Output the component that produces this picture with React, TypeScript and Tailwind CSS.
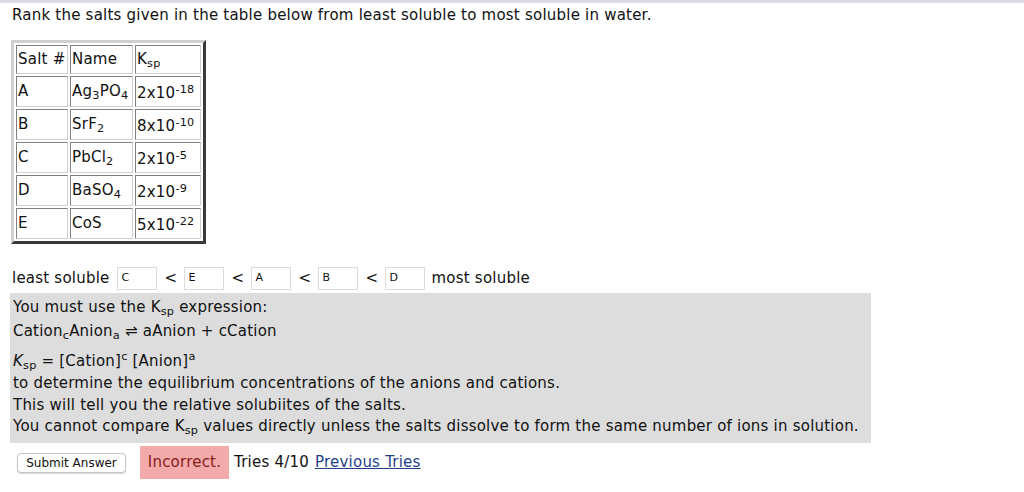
const font = { fontFamily: '"DejaVu Sans", Verdana, sans-serif' };

type Salt = { id: string; name: React.ReactNode; base: string; exp: string };

const salts: Salt[] = [
  { id: "A", name: <>Ag<sub>3</sub>PO<sub>4</sub></>, base: "2x10", exp: "-18" },
  { id: "B", name: <>SrF<sub>2</sub></>, base: "8x10", exp: "-10" },
  { id: "C", name: <>PbCl<sub>2</sub></>, base: "2x10", exp: "-5" },
  { id: "D", name: <>BaSO<sub>4</sub></>, base: "2x10", exp: "-9" },
  { id: "E", name: <>CoS</>, base: "5x10", exp: "-22" },
];

const order = ["C", "E", "A", "B", "D"];

const cell =
  "whitespace-nowrap border border-t-[#808080] border-l-[#808080] border-r-[#d0d0d0] border-b-[#d0d0d0] px-[1px] align-middle text-left font-normal";

function Box({ value }: { value: string }) {
  return (
    <span className="inline-flex h-[23px] w-[40px] items-center border border-[#dcdcdc] bg-white pl-[4px] text-[11px]">
      {value}
    </span>
  );
}

export default function App() {
  return (
    <div className="min-h-screen whitespace-nowrap bg-white text-[15px] tracking-[0.22px] text-[#111]" style={font}>
      {/* top rule */}
      <div className="h-[3px] bg-[#d9dbe8]" />

      <div className="pl-[10px] pr-2">
        <p className="pl-[2px] pt-[2px] leading-[20px]">
          Rank the salts given in the table below from least soluble to most soluble in water.
        </p>

        {/* Salt table */}
        <table className="ml-[1px] mt-[15px] border-separate border-spacing-[2px] border-[3px] border-t-[#cfcfcf] border-l-[#cfcfcf] border-r-[#3a3a3a] border-b-[#3a3a3a]">
          <thead>
            <tr className="h-[29px]">
              <th className={`${cell} w-[52px]`}>Salt #</th>
              <th className={`${cell} w-[63px]`}>Name</th>
              <th className={`${cell} w-[66px]`}>
                K<sub>sp</sub>
              </th>
            </tr>
          </thead>
          <tbody>
            {salts.map((s) => (
              <tr key={s.id} className="h-[31px]">
                <td className={cell}>{s.id}</td>
                <td className={cell}>{s.name}</td>
                <td className={`${cell} pt-[4px]`}>
                  {s.base}
                  <sup>{s.exp}</sup>
                </td>
              </tr>
            ))}
          </tbody>
        </table>

        {/* Ranking */}
        <div className="mt-[21px] flex h-[26px] items-center pl-[2px]">
          <span className="mr-[7px]">least soluble</span>
          {order.map((v, i) => (
            <span key={v} className="flex items-center">
              {i > 0 && <span className="w-[27px] pl-[8px]">&lt;</span>}
              <Box value={v} />
            </span>
          ))}
          <span className="ml-[7px]">most soluble</span>
        </div>

        {/* Hint */}
        <div className="mt-[2px] w-[861px] bg-[#dddddd] px-[3px] pb-[6px] pt-[2px]">
          <div className="leading-[24px]">
            You must use the K<sub>sp</sub> expression:
          </div>
          <div className="leading-[24px]">
            Cation<sub>c</sub>Anion<sub>a</sub> ⇌ aAnion + cCation
          </div>
          <div className="h-[29px] pt-[7px] leading-[22px]">
            <i>K</i>
            <sub>sp</sub> = [Cation]<sup>c</sup> [Anion]<sup>a</sup>
          </div>
          <div className="leading-[23px]">
            to determine the equilibrium concentrations of the anions and cations.
          </div>
          <div className="leading-[20px]">This will tell you the relative solubiites of the salts.</div>
          <div className="leading-[22px]">
            You cannot compare K<sub>sp</sub> values directly unless the salts dissolve to form the same
            number of ions in solution.
          </div>
        </div>

        {/* Submit */}
        <div className="mt-[3px] flex items-center">
          <button className="ml-[7px] h-[20px] w-[109px] rounded-[4px] border border-[#c4c4c4] bg-white text-[12px] leading-[18px] tracking-normal shadow-[0_1px_1px_rgba(0,0,0,0.15)]">
            Submit Answer
          </button>
          <span className="ml-[14px] flex h-[33px] w-[89px] items-center justify-center bg-[#f2aaaa] text-[#8a1c1c]">
            Incorrect.
          </span>
          <span className="ml-[5px]">Tries 4/10</span>
          <a href="#" className="ml-[6px] text-[#1f3f8c] underline">
            Previous Tries
          </a>
        </div>
      </div>
    </div>
  );
}
